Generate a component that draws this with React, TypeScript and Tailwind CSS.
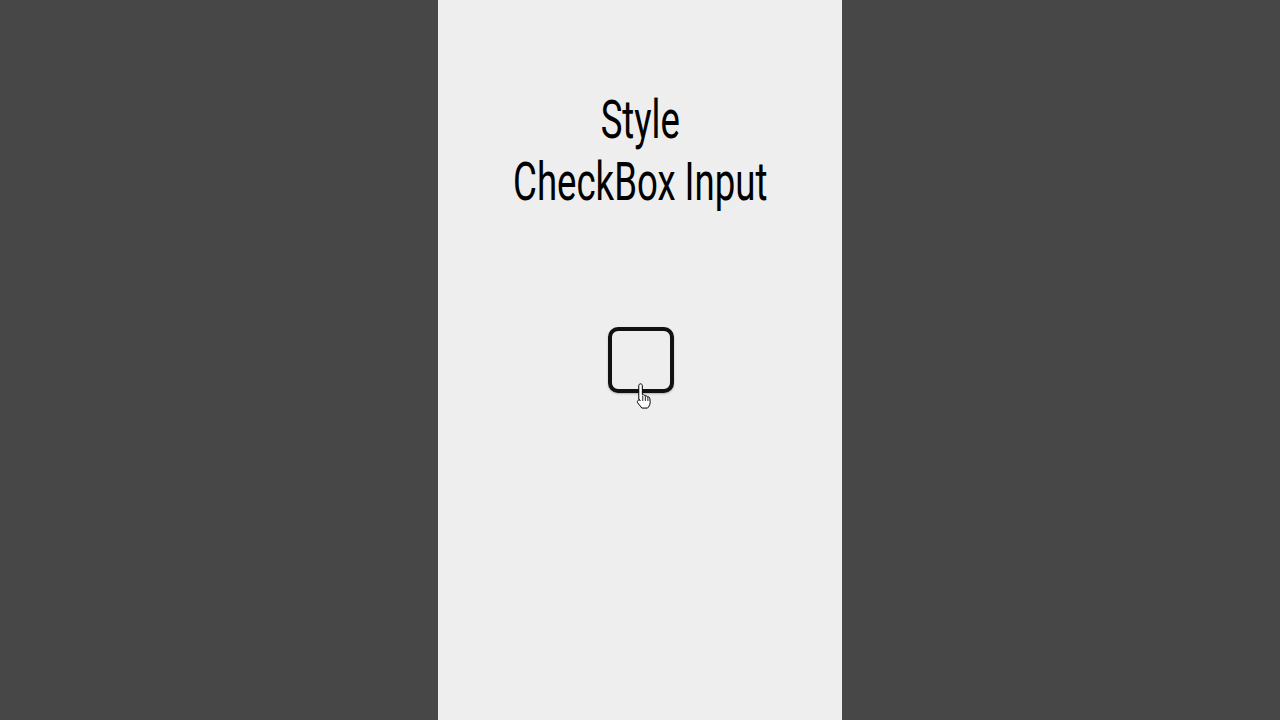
export default function App() {
  return (
    <div className="flex h-[720px] w-full justify-center bg-[#474747]">
      <div className="flex h-full w-[404px] flex-col items-center bg-[#eeeeee]">
        <h1
          className="mt-[89px] origin-center scale-x-[0.69] whitespace-nowrap text-center text-[53px] font-normal leading-[62px] text-black"
          style={{ fontFamily: 'Roboto, "Liberation Sans", sans-serif' }}
        >
          <span className="block">Style</span>
          <span className="block">CheckBox Input</span>
        </h1>
        <label className="relative ml-[2px] mt-[114px] block cursor-pointer">
          <input type="checkbox" className="peer sr-only" />
          <span className="block h-[66px] w-[66px] rounded-[10px] border-[4px] border-[#111111] bg-[#eeeeee] shadow-[0_1px_2px_rgba(0,0,0,0.25)]" />
          {/* mouse pointer over the box */}
          <svg className="absolute left-[27px] top-[55px]" width="20" height="27" viewBox="0 0 18 24">
            <path
              d="M5 1.5c.9 0 1.6.7 1.6 1.6v8.2l.4-.1c.9-.2 1.7.3 1.9 1.1l.3-.1c.9-.2 1.7.3 1.9 1.1l.3-.1c.9-.2 1.8.4 1.9 1.3l.3 2.7c.2 2-.4 3.9-1.7 5.4l-.6.7H6.2l-3.7-4.6c-.6-.7-.5-1.7.2-2.3.6-.5 1.5-.5 2.1 0l-1.4-1V3.1c0-.9.7-1.6 1.6-1.6z"
              fill="#ffffff"
              stroke="#000000"
              strokeWidth="0.9"
              strokeLinejoin="round"
            />
            <path d="M7 12.5v4M9.3 13v3.5M11.6 13.6v3" stroke="#000" strokeWidth="0.8" strokeLinecap="round" />
          </svg>
        </label>
      </div>
    </div>
  )
}
